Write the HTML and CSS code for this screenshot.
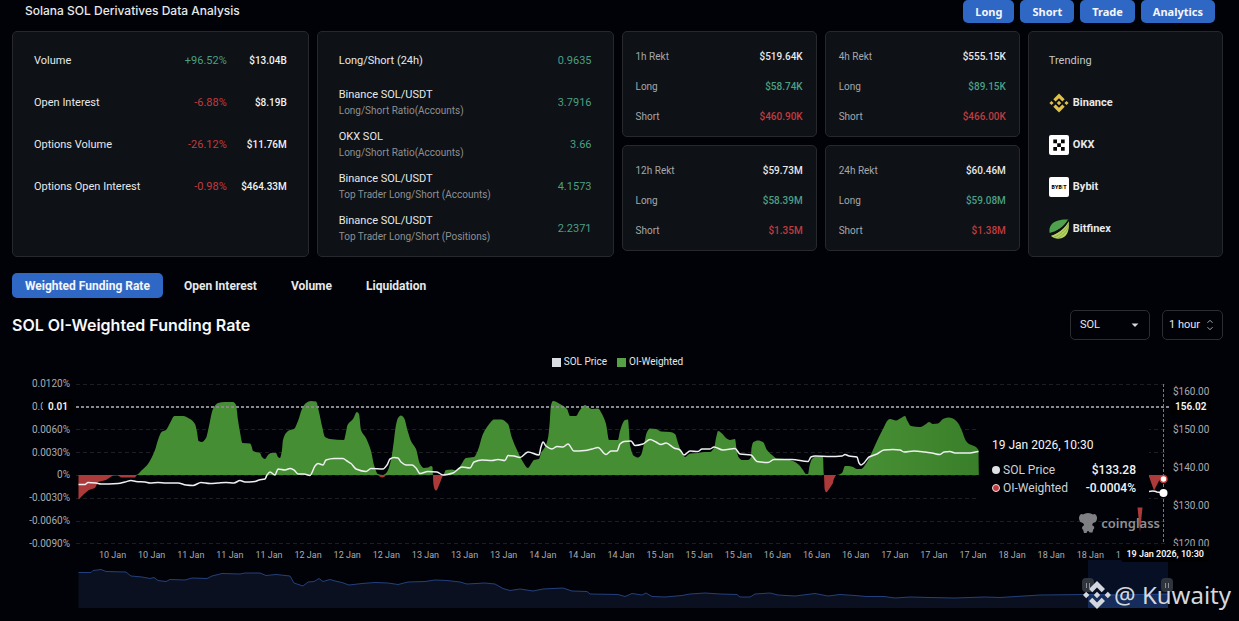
FILE: index.html
```
<!DOCTYPE html>
<html lang="en">
<head>
<meta charset="utf-8">
<meta name="viewport" content="width=device-width, initial-scale=1">
<title>Solana SOL Derivatives Data Analysis</title>
<link rel="stylesheet" href="styles.css">
</head>
<body>
<main class="page">
  <header class="topbar">
    <h1 class="title">Solana SOL Derivatives Data Analysis</h1>
    <nav class="actions">
      <button class="btn">Long</button>
      <button class="btn">Short</button>
      <button class="btn">Trade</button>
      <button class="btn">Analytics</button>
    </nav>
  </header>

  <section class="cards">
    <div class="card wide">
      <table class="stats">
        <tr><th scope="row">Volume</th><td class="up">+96.52%</td><td class="amount">$13.04B</td></tr>
        <tr><th scope="row">Open Interest</th><td class="down">-6.88%</td><td class="amount">$8.19B</td></tr>
        <tr><th scope="row">Options Volume</th><td class="down">-26.12%</td><td class="amount">$11.76M</td></tr>
        <tr><th scope="row">Options Open Interest</th><td class="down">-0.98%</td><td class="amount">$464.33M</td></tr>
      </table>
    </div>
    <div class="card wide">
      <table class="stats ratios">
        <tr><th scope="row">Long/Short (24h)</th><td class="up">0.9635</td></tr>
        <tr><th scope="row">Binance SOL/USDT<small>Long/Short Ratio(Accounts)</small></th><td class="up">3.7916</td></tr>
        <tr><th scope="row">OKX SOL<small>Long/Short Ratio(Accounts)</small></th><td class="up">3.66</td></tr>
        <tr><th scope="row">Binance SOL/USDT<small>Top Trader Long/Short (Accounts)</small></th><td class="up">4.1573</td></tr>
        <tr><th scope="row">Binance SOL/USDT<small>Top Trader Long/Short (Positions)</small></th><td class="up">2.2371</td></tr>
      </table>
    </div>
    <div class="rekts">
      <div class="card rekt"><table>
        <tr><th scope="row">1h Rekt</th><td>$519.64K</td></tr>
        <tr><th scope="row">Long</th><td class="up">$58.74K</td></tr>
        <tr><th scope="row">Short</th><td class="down">$460.90K</td></tr>
      </table></div>
      <div class="card rekt"><table>
        <tr><th scope="row">4h Rekt</th><td>$555.15K</td></tr>
        <tr><th scope="row">Long</th><td class="up">$89.15K</td></tr>
        <tr><th scope="row">Short</th><td class="down">$466.00K</td></tr>
      </table></div>
      <div class="card rekt"><table>
        <tr><th scope="row">12h Rekt</th><td>$59.73M</td></tr>
        <tr><th scope="row">Long</th><td class="up">$58.39M</td></tr>
        <tr><th scope="row">Short</th><td class="down">$1.35M</td></tr>
      </table></div>
      <div class="card rekt"><table>
        <tr><th scope="row">24h Rekt</th><td>$60.46M</td></tr>
        <tr><th scope="row">Long</th><td class="up">$59.08M</td></tr>
        <tr><th scope="row">Short</th><td class="down">$1.38M</td></tr>
      </table></div>
    </div>
    <div class="card trending">
      <h2 class="trend-title">Trending</h2>
      <a class="trend" href="#">
        <svg class="logo" viewBox="0 0 20 20" aria-hidden="true"><g fill="#dfc04b"><path d="M10 .6l5.700 5.700-2.300 2.300L10 5.200 6.600 8.600 4.300 6.300z"/><path d="M10 19.400l5.700-5.700-2.300-2.300L10 14.800l-3.400-3.400-2.300 2.300z"/><path d="M10 7.800l2.200 2.200-2.200 2.200L7.800 10zM2.500 7.900L4.600 10l-2.100 2.100L.4 10zM17.500 7.900l2.100 2.100-2.100 2.100-2.100-2.100z"/></g></svg>
        Binance</a>
      <a class="trend" href="#">
        <svg class="logo" viewBox="0 0 20 20" aria-hidden="true"><rect width="20" height="20" rx="2" fill="#fff"/><path fill="#050505" d="M4.300 4.500H8v3.700H4.300zM12 4.500h3.700v3.700H12zM8.200 8.200h3.700v3.700H8.200zM4.300 12H8v3.700H4.300zM12 12h3.700v3.700H12z"/></svg>
        OKX</a>
      <a class="trend" href="#">
        <svg class="logo" viewBox="0 0 20 20" aria-hidden="true"><rect width="20" height="20" rx="2" fill="#fff"/><text class="bybit" x="10" y="12" text-anchor="middle">BYB<tspan fill="#b5c42e">I</tspan>T</text></svg>
        Bybit</a>
      <a class="trend" href="#">
        <svg class="logo" viewBox="0 0 20 20" aria-hidden="true"><path fill="#4fa14d" d="M19.500.5C11.500.2 5.500 1.800 2.500 5.500.3 8.200.1 11.500.7 14 6.500 12.500 14.500 8.500 19.500.5z"/><path fill="#b9d35c" d="M19.700 1.500c.7 8-.5 13.800-4.800 16.600-3.900 2.600-9.700 1.900-13.200-1.400C8.500 15 16 9.500 19.700 1.500z"/><path fill="none" stroke="#6f9f48" stroke-width=".7" d="M5 18.300C11 16 16.500 11 19.500 5M8.500 19.300C13.500 17 17.500 13 19.600 8"/><path fill="none" stroke="#0e1115" stroke-width="1.500" d="M1 16Q13.500 12 19.700 1"/></svg>
        Bitfinex</a>
    </div>
  </section>

  <nav class="tabs">
    <button class="tab active">Weighted Funding Rate</button>
    <button class="tab">Open Interest</button>
    <button class="tab">Volume</button>
    <button class="tab">Liquidation</button>
  </nav>

  <section class="chart-head">
    <h2 class="chart-title">SOL OI-Weighted Funding Rate</h2>
    <div class="filters">
      <span class="select coin">
        <select aria-label="Coin"><option>SOL</option></select>
        <svg class="caret" viewBox="0 0 8 12" aria-hidden="true"><path d="M.6 4.500h6.800L4 8z" fill="#d5d7da"/></svg>
      </span>
      <span class="select span">
        <select aria-label="Interval"><option>1 hour</option></select>
        <svg class="caret" viewBox="0 0 8 12" aria-hidden="true"><path d="M1.500 3.800L4 1.300l2.500 2.500M1.500 8.200L4 10.700l2.500-2.500" fill="none" stroke="#a9acb1"/></svg>
      </span>
    </div>
  </section>

  <ul class="legend">
    <li><i class="swatch price"></i>SOL Price</li>
    <li><i class="swatch rate"></i>OI-Weighted</li>
  </ul>

  <section class="chart">
    <div class="axis left">
      <span>0.0120%</span><span>0.0090%</span><span>0.0060%</span><span>0.0030%</span><span>0%</span><span>-0.0030%</span><span>-0.0060%</span><span>-0.0090%</span>
      <b class="tag tag-left">0.01</b>
    </div>
    <div class="plot">
      <svg class="canvas" viewBox="76 384 1090 160" preserveAspectRatio="none" aria-label="Funding rate and price">
        <defs>
          <linearGradient id="shade" gradientUnits="userSpaceOnUse" x1="78" y1="0" x2="979" y2="0">
            <stop offset="0" stop-color="#468e33"/><stop offset=".88" stop-color="#468e33"/><stop offset="1" stop-color="#397f2a"/>
          </linearGradient>
        </defs>
        <path class="gridlines" d="M76 384.500H1166M76 429.500H1166M76 452.500H1166M76 475.500H1166M76 498.500H1166M76 521.500H1166M76 543.500H1166"/>
        <path id="green" fill="url(#shade)"/>
        <g class="negative">
          <path d="M78.500 475L137 475 135 477.500 121 477.500 118 475.500 113 475.500 106 480 98 482 95 488 89 490 84 494 78.500 499.500z"/>
          <path d="M378 475h8q-3.500 5-8 0z"/>
          <path d="M433 475h10q-3 8-5.500 14-1.500 3-3 0Q433 485 433 475z"/>
          <path d="M824 475h12q-3 5-3 8-3 5-6 9-2 1-2.500-4z"/>
          <path d="M1148.500 475H1162L1154 490.500z"/>
          <path d="M1137.500 507.500h5L1140 532z"/>
        </g>
        <path id="price" class="price-line"/>
        <path class="price-line" d="M1149 491.500q5-1 8 .5l7 1"/>
        <path class="cross" d="M76 407H1172"/>
        <path class="cross vertical" d="M1163.500 384V543"/>
        <circle cx="1163.500" cy="479" r="3.500" fill="#fff" stroke="#c23a3a" stroke-width="1.500"/>
        <circle cx="1163.500" cy="493" r="4" fill="#fff"/>
      </svg>
      <div class="brand">
        <svg class="bull" viewBox="0 0 18 20" aria-hidden="true"><path d="M4 1.500Q6 0 9 0t5 1.500q1.500-1 3 .5 1.500 2 .8 4.500Q17.500 9.500 14 10q-.5 1.500-1 2l2 1.500q.8 2-.8 3l-.7 3H10.500L9.500 18h-1l-1 2H5l-.8-3q-2-1.500-.7-3.500l1.700-1.500Q4.500 11 4 10 .7 9.500.2 6.500-.4 4 1 2q1.500-1.500 3-.5z"/></svg>
        <span>coinglass</span>
      </div>
      <div class="tip">
        <p class="tip-date">19 Jan 2026, 10:30</p>
        <dl class="tip-rows">
          <dt><i class="dot white"></i>SOL Price</dt><dd>$133.28</dd>
          <dt><i class="dot red"></i>OI-Weighted</dt><dd>-0.0004%</dd>
        </dl>
      </div>
    </div>
    <div class="axis right">
      <span>$160.00</span><span>$150.00</span><span>$140.00</span><span>$130.00</span><span>$120.00</span>
      <b class="tag tag-right">156.02</b>
    </div>
    <div class="dates">
      <span>10 Jan</span><span>10 Jan</span><span>11 Jan</span><span>11 Jan</span><span>11 Jan</span><span>12 Jan</span><span>12 Jan</span><span>12 Jan</span><span>13 Jan</span><span>13 Jan</span><span>13 Jan</span><span>14 Jan</span><span>14 Jan</span><span>14 Jan</span><span>15 Jan</span><span>15 Jan</span><span>15 Jan</span><span>16 Jan</span><span>16 Jan</span><span>16 Jan</span><span>17 Jan</span><span>17 Jan</span><span>17 Jan</span><span>18 Jan</span><span>18 Jan</span><span>18 Jan</span><span>19 Jan</span>
      <b class="tag tag-date">19 Jan 2026, 10:30</b>
    </div>
    <svg class="range" viewBox="76 560 1096 48" preserveAspectRatio="none" aria-label="Visible range">
      <path id="range-fill" fill="#0a101f"/>
      <path id="range-line" class="range-line"/>
      <rect x="1088" y="560" width="80" height="48" fill="#1e459b" fill-opacity=".2"/>
      <path d="M1088 594.500L1168 594V608H1088z" fill="#2b57ad" fill-opacity=".3"/>
      <g class="handle"><rect x="1082" y="578" width="12" height="14" rx="4"/><rect x="1161" y="578" width="12" height="14" rx="4"/><path d="M1086.500 583v5M1089.500 583v5M1165.500 583v5M1168.500 583v5"/></g>
    </svg>
  </section>

  <div class="author">
    <svg class="author-logo" viewBox="0 0 28 28" aria-hidden="true"><path d="M14 0l8 8-3.300 3.300L14 6.600l-4.700 4.700L6 8zM14 28l8-8-3.300-3.300-4.700 4.700-4.700-4.700L6 20zM14 10.800l3.200 3.200-3.200 3.200-3.200-3.200zM3.200 10.800L6.400 14l-3.200 3.200L0 14zM24.800 10.800L28 14l-3.200 3.200-3.200-3.200z"/></svg>
    <span>@ Kuwaity</span>
  </div>
</main>
<script src="chart.js"></script>
</body>
</html>
```
FILE: styles.css
```
* { box-sizing: border-box; }
body {
  margin: 0;
  background: #010207;
  color: #e6e8ea;
  font: 11px/16px Roboto, "Noto Sans", sans-serif;
  overflow: hidden;
}
h1, h2, p, ul, dl, dd { margin: 0; padding: 0; }
button, select { font: inherit; color: inherit; border: 0; background: none; cursor: pointer; }
table { width: 100%; border-collapse: collapse; }
th, td { padding: 0; font-weight: 400; }
th { text-align: left; }
td { text-align: right; }

.page { position: relative; padding: 0 16px 13px 12px; }

.topbar { display: flex; justify-content: space-between; height: 24px; padding: 0 8px 0 13px; }
.title { padding-top: 3px; font: 500 12px/16px Inter, sans-serif; }
.actions { display: flex; gap: 6px; height: 23px; }
.btn, .tab { border-radius: 5px; padding: 0 13px; font: 700 11px/16px "Noto Sans", sans-serif; }
.btn { padding: 0 12px; background: #2f68c4; color: #f4f6fa; }

.cards { display: grid; grid-template-columns: repeat(12, minmax(0, 1fr)); gap: 8px; margin-top: 7px; }
.card { background: #0e1115; border: 1px solid #26282c; border-radius: 5px; }
.wide { grid-column: span 3; padding: 8px 21px 6px; }
.stats tr { height: 42px; }
.stats td { font-size: 11px; }
.stats .amount { width: 60px; font-size: 10px; font-weight: 500; color: #f2f3f4; }
.stats small { display: block; font-size: 10px; color: #8d9094; }
td.up { color: #4b9f86; }
td.down { color: #c03c40; }

.rekts { grid-column: span 4; display: grid; grid-template-columns: 1fr 1fr; gap: 8px; align-content: start; }
.rekt { padding: 10px 13px 4px; }
.rekt tr { height: 30px; }
.rekt th { font-size: 10px; color: #a5a8ac; }
.rekt td { font-size: 10px; font-weight: 500; }

.trending { grid-column: span 2; padding: 8px 20px 6px; }
.trend-title, .trend { display: flex; align-items: center; gap: 4px; height: 42px; font-size: 11px; }
.trend-title { font-weight: 400; color: #c3c6ca; }
.trend { font-weight: 700; color: #e6e8ea; text-decoration: none; }
.logo { width: 20px; height: 20px; }
.bybit { font: 800 5px Inter, sans-serif; }

.tabs { display: flex; gap: 8px; height: 25px; margin-top: 16px; }
.tab { font: 700 12px/16px Roboto, sans-serif; }
.tab.active { background: #2f68c4; color: #f4f6fa; }

.chart-head { display: flex; justify-content: space-between; align-items: center; margin-top: 12px; }
.chart-title { font: 600 16px/20px Inter, sans-serif; color: #f8f9fa; }
.filters { display: flex; gap: 12px; }
.select { display: grid; align-items: center; height: 30px; border: 1px solid #2b2d31; border-radius: 5px; }
.select select, .caret { grid-area: 1 / 1; }
.select select { appearance: none; width: 100%; height: 28px; padding: 0 9px; }
.coin { width: 80px; }
.span { width: 61px; }
.span select { padding: 0 6px; }
.caret { justify-self: end; width: 8px; height: 12px; margin-right: 10px; pointer-events: none; }
.span .caret { margin-right: 8px; }

.legend { display: flex; justify-content: center; gap: 10px; margin-top: 14px; list-style: none; font-size: 10px; line-height: 16px; }
.legend li { display: flex; align-items: center; gap: 3px; }
.swatch { width: 9px; height: 9px; }
.swatch.price { background: #d9dce0; }
.swatch.rate { background: #56a045; }

.chart {
  display: grid;
  grid-template-columns: 64px minmax(0, 1fr) 57px;
  grid-template-rows: 160px 16px 48px;
  margin-top: 14px;
}
.axis { position: relative; display: flex; flex-direction: column; justify-content: space-between; font-size: 10px; line-height: 12px; color: #a9acb0; }
.axis.left { margin: -6px 0; padding-right: 6px; text-align: right; }
.axis.right { margin: 2px 0 -6px; padding-left: 7px; }
.tag { position: absolute; background: #000; color: #f4f5f6; border-radius: 3px; font-size: 10px; line-height: 16px; font-weight: 600; }
.tag-left { right: 3px; top: 21px; padding: 0 5px; }
.tag-right { left: 4px; top: 13px; padding: 0 5px; }
.tag-date { right: 14px; top: -1px; padding: 0 5px; font-size: 9px; z-index: 1; }

.plot { position: relative; }
.canvas, .range { display: block; width: 100%; height: 100%; overflow: visible; }
.gridlines, .cross, .price-line, .range-line { fill: none; vector-effect: non-scaling-stroke; }
.gridlines { stroke: #1c1e22; stroke-dasharray: 4 3; }
.cross { stroke: #86888c; stroke-width: 2; stroke-dasharray: 3 2; }
.cross.vertical { stroke: #77797d; stroke-width: 1; }
.negative { fill: #ad3a3b; }
.price-line { stroke: #eef0f2; stroke-width: 1.500; }

.tip { position: absolute; right: 17px; top: 41px; width: 170px; height: 82px; padding: 12px 13px; background: #010207; font-size: 12px; }
.tip-date { line-height: 16px; color: #f4f5f6; }
.tip-rows { display: grid; grid-template-columns: 1fr auto; margin-top: 8px; line-height: 18px; }
.tip-rows dt { display: flex; align-items: center; gap: 3px; color: #cfd1d4; }
.tip-rows dd { text-align: right; font-weight: 500; color: #f4f5f6; }
.dot { width: 8px; height: 8px; border-radius: 50%; background: #dfe1e4; }
.dot.red { background: #c03c40; border: 1px solid #f2dede; }

.brand { position: absolute; right: 6px; top: 129px; display: flex; align-items: center; gap: 4px; color: #8f9195; font: 600 13px/20px "Noto Sans", sans-serif; }
.bull { width: 18px; height: 20px; fill: #7e8084; }

.dates { position: relative; grid-column: 1 / -1; display: grid; grid-template-columns: repeat(27, minmax(0, 1fr)); margin-top: 3px; padding: 0 74px 0 81px; font-size: 9px; text-align: center; white-space: nowrap; color: #a9acb0; }
.range { grid-column: 2; width: calc(100% + 6px); }
.range-line { stroke: #24407c; }
.handle rect { fill: #30353d; }
.handle path { stroke: #8b9098; }

.author { position: absolute; right: 8px; bottom: 8px; display: flex; align-items: center; gap: 3px; color: #d4d7dd; font: 24px/36px "Noto Sans", sans-serif; }
.author-logo { width: 28px; height: 28px; fill: #d4d7dd; }
```
FILE: chart.js
```
// Alternating x, y samples in the coordinate system of each SVG.
const rate = [136,475,142,470,148,464,155,450,158,440,161.5,432,166,430,170,423,174.5,416,183,416,190,419,195,424,197,432,198.5,441,202,442,206,438,209,426,213,409,218,403,225,402,233,402,236,405,238,420,240,432,242.5,443,250,443.5,251.5,446,253,451,260,453,262,457,265,459,268,455,271,453,276,453,278,457,280,458,282,450,283,440,286,433,290,430,294,429,298,421,302,409,306,403,311,401,316,401.5,319,412,322,426,325,437,330,439,344,440,346,432,347.5,425,353,419,357,412,359,414,361,430,366,438,371,451,374,465,378,474,383,475,387,472,391,460,394,440,396,425,398,418,401,415.5,404,418,408,432,411,441,416,449,420,464,424,468,428,467.5,431,466,432.5,467,433,475,443,475,446,470,452,469.5,456,470.5,461,465,466,458,474,457,478,450,483,434,490,423,494,419.5,501,419.5,508,424,512,438,517,450,523,462,528,468,531,464,534,460,539,459,541,453,545,447,548,438,549.5,425,551,405,553,401,560,404,567,409,570,416,576,416,580,410,585,405,588,407,592,409,598,408.5,602,414,606,424,609,440,618,440,620,431,625,420,628,419.5,629,430,630,445,634,456,638,457.5,641,455,644,444,647,432,650,428.5,656,429,661,431.5,670,432,675,434,678,443,682,453,685,457,690,453.5,698,453,704,452,710,452,714,448,716.5,436,718,431,722,433.5,726,438,730,440,735,439,736.5,449,738.5,457,742,460,748,460,751,457,751.5,448,753.5,442,758,440.5,763,442,767,450,772,455,777,458.5,785,459,793,461,799,465,803,470,806,474,808,474,809.5,466,812,459,816,456.5,823,457,824,475,837,475,842,473,845,466,848,466,853,467,857,469,861,469,867,462,872,452,877,441,883,429,888,420,890,419,896,420.5,901,418,905,416,907.5,421,911,426,920,427,926,424,929,422,933,424,938,423.5,943,419,948,417.5,953,418.5,958,423,962,431,966,441,969,444,974,446,978.5,450,979,475];
const price = [78.5,484.5,85,484.5,88,482.5,96,483,101,484,118,483.5,125,482,131,480.5,136,481.5,145,482,150,483,158,482.5,166,483,178,483,186,485,193,485.5,201,482.5,210,483.5,218,483,226,482.5,234,483,240,480.5,245,482,255,481.5,259,480,265,479,267,475,270,472,275,475,278,469,285,470,290,468.5,294,470,298,474,304,474,310,475.5,315,466,318,463.5,323,465,326,460,334,458.5,343,458.5,347,461,351,463.5,356,469,366,471.5,371,468.5,383,469,387,465,390,459,394,457.5,398,458,401,462,406,465,412,465,416,468,420,473.5,428,471.5,437,472,443,475,453,473,462,467,470,468,474,462,482,460,492,460.5,498,459.5,505,460.5,508,455.5,514,456,520,457.5,528,452,539,455,541,447,543,442,546,446,552,449,557,446.5,563,447,568,444,574,451,585,450.5,592,449,598,447.5,606,454.5,611,451,617,451,620,444,624,441.5,631,441,635,445.5,643,444,650,439.5,656,442,661,444.5,666,443,674,448,680,450,684,455,690,451,698,451.5,702,449,710,449,714,447,723,450,735,448.5,740,454,751,455,757,461.5,768,462.5,774,459.5,792,459.5,808,461.5,811,457,815,456,830,456.5,842,456,845,454.5,849,456,857,457,859,463,861,465,864,463,869,457,877,454,884,450,893,449.5,900,450,904,452,914,451,925,452,932,453,940,454.5,944,452,950,451.5,955,453,963,453,970,453,978.5,451.5];
const overview = [78.5,572.5,91,572.5,93,570.5,101,569.5,106,571.5,126,572,131,576,142,577,150,578.5,154,577.5,158,580.5,166,581.5,170,579.5,185,580,192,578,207,578.5,212,576,222,573.5,240,574,245,573,260,573,266,575.5,276,574.5,290,576,294,583,300,585,303,586,308,582,314,581.5,319,578.5,323,581.5,330,579.5,335,581,342,582.5,349,585,362,583.5,375,582.5,388,583,398,584.5,408,582,425,581.5,435,580,447,580.5,460,582,467,584,485,583,495,584,503,588.5,510,590.5,520,589,533,591,543,589,563,588,572,591,587,591.5,590,594,618,594.5,625,596.5,632,593.5,642,595,646,593,652,596.5,665,597,682,595.5,690,594,705,593,720,594,737,594.5,740,597,750,597,755,594,770,593,778,595,795,596,815,593.5,828,596,840,594.5,855,595.5,866,596.5,884,596.5,895,598,910,597,930,597.5,955,598,985,597,1000,597.5,1040,595,1088,594.5,1120,595,1168,594];

const pairs = a => a.reduce((p, v, i) => (i % 2 ? p[p.length - 1].push(v) : p.push([v]), p), []);

// Monotone cubic interpolation, so flat runs never overshoot.
function smooth(flat) {
  const p = pairs(flat);
  const s = p.slice(1).map((q, i) => (q[1] - p[i][1]) / (q[0] - p[i][0]));
  const m = p.map((_, i) => {
    const a = s[i - 1], b = s[i];
    if (a === undefined || b === undefined) return 0;
    return a * b <= 0 ? 0 : 2 * a * b / (a + b);
  });
  let d = "M" + p[0];
  for (let i = 1; i < p.length; i++) {
    const h = (p[i][0] - p[i - 1][0]) / 3;
    d += "C" + [p[i - 1][0] + h, p[i - 1][1] + m[i - 1] * h, p[i][0] - h, p[i][1] - m[i] * h, p[i][0], p[i][1]];
  }
  return d;
}

const set = (id, d) => document.getElementById(id).setAttribute("d", d);
set("green", smooth(rate) + "Z");
set("price", smooth(price));
set("range-line", "M" + overview);
set("range-fill", "M" + overview + ",1168,608,78.5,608Z");
```
